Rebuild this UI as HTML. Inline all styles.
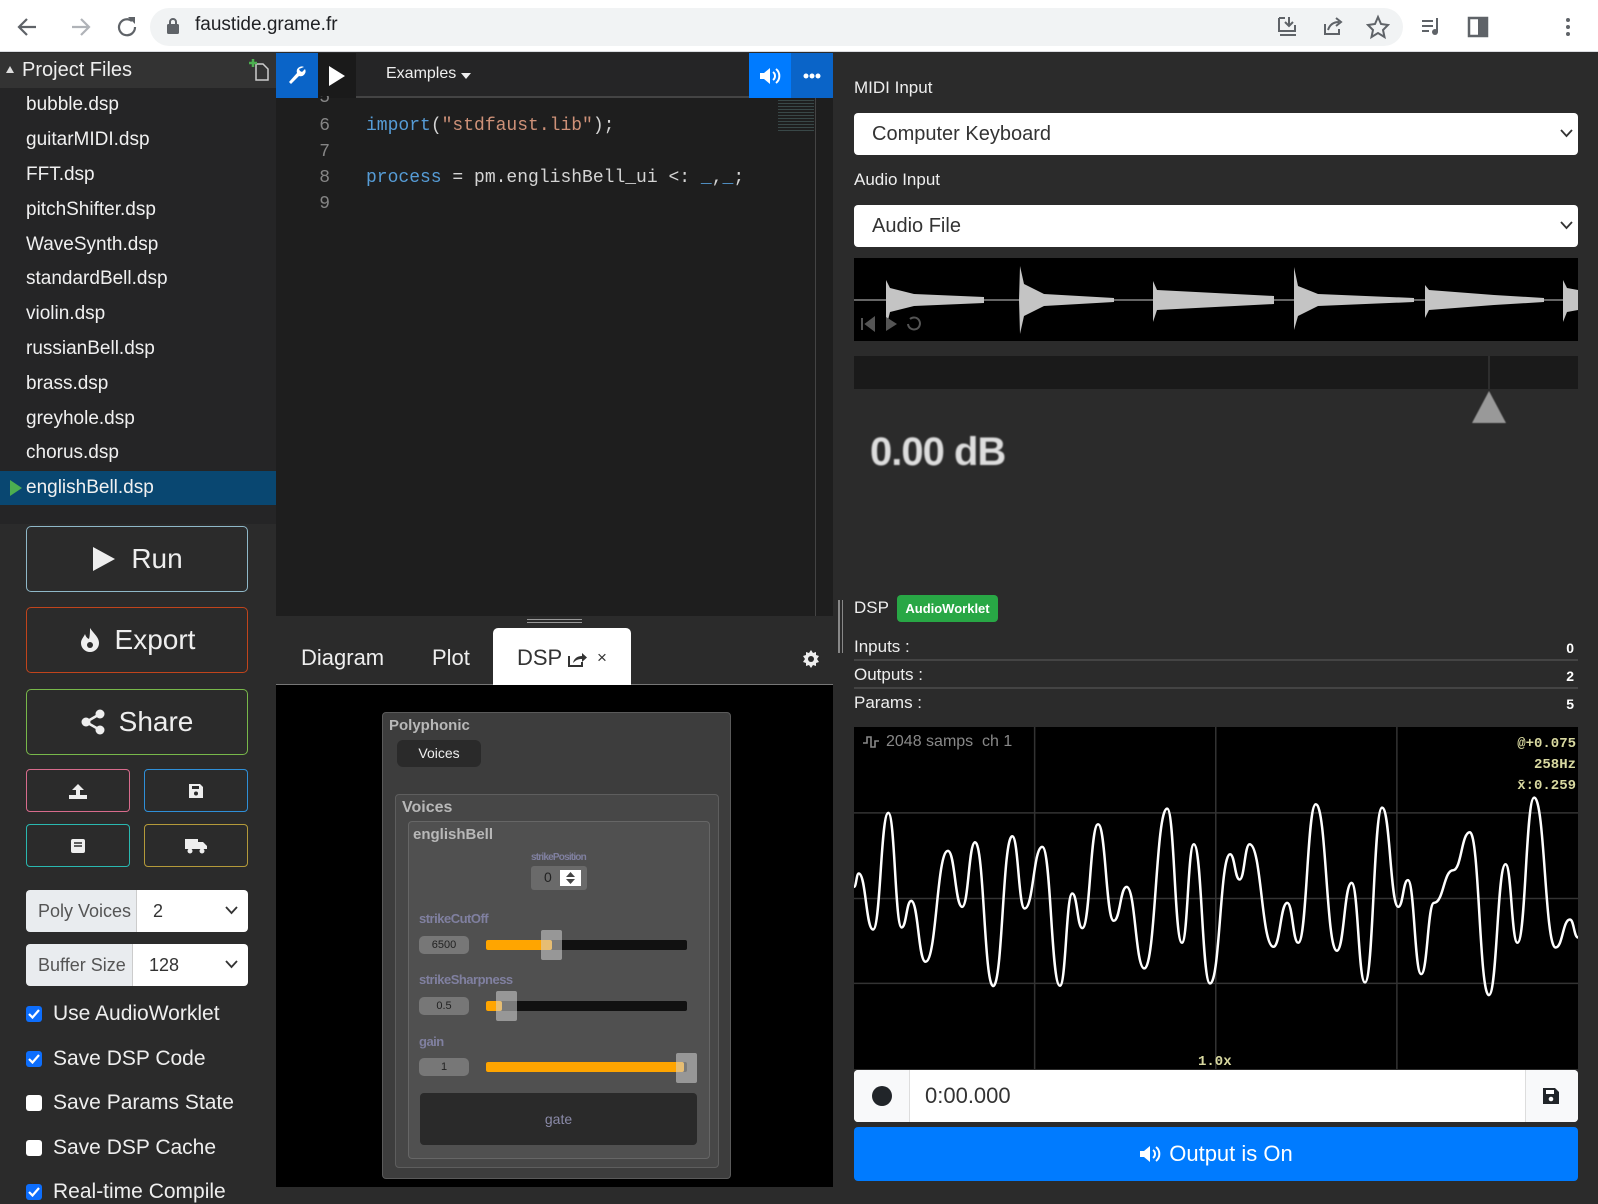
<!DOCTYPE html>
<html><head><meta charset="utf-8"><style>
*{box-sizing:border-box;margin:0;padding:0}
body{width:1598px;height:1200px;overflow:hidden;background:#2b2b2b;font-family:"Liberation Sans",sans-serif;position:relative;color:#eee}
.a{position:absolute}
.chrome{left:0;top:0;width:1598px;height:52px;background:#fff;border-bottom:1px solid #dadce0}
.pill{left:150px;top:8px;width:1253px;height:38px;background:#f1f3f4;border-radius:19px}
.file{left:26px;font-size:19px;color:#f0f0f0}
.btn{left:26px;width:222px;border:1px solid;border-radius:5px;display:flex;align-items:center;justify-content:center;font-size:28px;color:#eee;gap:14px}
.sb{width:104px;height:43px;border:1px solid;border-radius:4px;display:flex;align-items:center;justify-content:center}
.grp{left:26px;width:222px;height:42px;border-radius:4px;display:flex;font-size:18px;overflow:hidden}
.grp .l{background:#e9ecef;color:#555;display:flex;align-items:center;padding-left:12px;border-right:1px solid #ccc}
.grp .r{background:#fff;color:#333;flex:1;display:flex;align-items:center;padding-left:16px;position:relative}
.chk{left:26px;font-size:21px;color:#eee;display:flex;align-items:center;gap:11px}
.box{width:16px;height:16px;border-radius:3px;background:#fff;display:inline-flex;align-items:center;justify-content:center}
.box.on{background:#0d6efd}
.ln{left:300px;width:30px;text-align:right;font:18px "Liberation Mono",monospace;color:#858585}
.code{left:366px;font:18px "Liberation Mono",monospace;color:#d4d4d4;white-space:pre}
.lab{font-weight:bold;color:#b8b8b8;font-size:15px}
.plab{left:419px;font-weight:bold;font-size:13px;color:#8080a0;letter-spacing:-.5px}
.vb{left:419px;width:50px;height:18px;background:#777;border-radius:5px;font-size:11px;color:#222;text-align:center;line-height:18px}
.trk{left:486px;width:201px;height:10px;background:#111;border-radius:2px}
.fill{background:#ffa500;height:10px;border-radius:2px}
.th{width:21px;height:30px;background:rgba(210,210,210,.55);border-radius:2px}
.sel{left:854px;width:724px;height:42px;background:#fff;border-radius:4px;color:#333;font-size:20px;padding-left:18px;display:flex;align-items:center}
.rl{left:854px;font-size:17px;color:#eee}
.rv{right:24px;font-size:14px;font-weight:bold;color:#fff}
.hr{left:854px;width:724px;height:2px;background:#444}
</style></head><body>

<div class="a chrome"></div>
<div class="a pill"></div>
<svg class="a" style="left:16px;top:14px" width="130" height="26" viewBox="0 0 130 26">
<path d="M20 13H4M11 5L3 13l8 8" stroke="#5f6368" stroke-width="2.2" fill="none"/>
<path d="M56 13h16M65 5l8 8-8 8" stroke="#b0b3b8" stroke-width="2.2" fill="none"/>
<path d="M116 7a8 8 0 1 0 3 6" stroke="#5f6368" stroke-width="2.2" fill="none"/><path d="M112 3h7v7z" fill="#5f6368"/>
</svg>
<svg class="a" style="left:166px;top:17px" width="14" height="18"><rect x="1" y="7" width="12" height="10" rx="1.5" fill="#5f6368"/><path d="M4 7V5a3 3 0 0 1 6 0v2" stroke="#5f6368" stroke-width="2" fill="none"/></svg>
<div class="a" style="left:195px;top:14px;font-size:19px;color:#202124">faustide.grame.fr</div>
<svg class="a" style="left:1276px;top:14px" width="310" height="26" viewBox="0 0 310 26">
<g stroke="#5f6368" stroke-width="2" fill="none">
<path d="M3 4h6M3 4v13h16v-6M13 3v9M9 8l4 4 4-4M4 21h16"/>
<path d="M49 10v10h14v-5M52 16c2-6 6-8 11-8M60 4l5 4-5 4"/>
<path d="M102 3l3 7 7 1-5 5 1.5 7-6.5-4-6.5 4 1.5-7-5-5 7-1z"/>
<path d="M146 7h11M146 12h11M146 17h7M161 4v14"/>
</g>
<circle cx="159" cy="18" r="3" fill="#5f6368"/>
<rect x="193" y="4" width="18" height="18" stroke="#5f6368" stroke-width="2.5" fill="none"/><rect x="202" y="4" width="9" height="18" fill="#5f6368"/>
<circle cx="292" cy="6" r="2" fill="#5f6368"/><circle cx="292" cy="13" r="2" fill="#5f6368"/><circle cx="292" cy="20" r="2" fill="#5f6368"/>
</svg>

<div class="a" style="left:0;top:53px;width:276px;height:35px;background:#333"></div>
<div class="a" style="left:0;top:88px;width:276px;height:436px;background:#252526"></div>
<div class="a" style="left:6px;top:66px;width:0;height:0;border-left:4px solid transparent;border-right:4px solid transparent;border-bottom:7px solid #ddd"></div>
<div class="a" style="left:22px;top:59px;font-size:20px;color:#eee">Project Files</div>
<svg class="a" style="left:247px;top:58px" width="24" height="24"><path d="M9 6h7l5 5v11H9z" stroke="#ccc" stroke-width="1.5" fill="none"/><path d="M6 1v8M2 5h8" stroke="#4caf50" stroke-width="2.5"/></svg>
<div class="a file" style="top:94px">bubble.dsp</div>
<div class="a file" style="top:129px">guitarMIDI.dsp</div>
<div class="a file" style="top:164px">FFT.dsp</div>
<div class="a file" style="top:199px">pitchShifter.dsp</div>
<div class="a file" style="top:234px">WaveSynth.dsp</div>
<div class="a file" style="top:268px">standardBell.dsp</div>
<div class="a file" style="top:303px">violin.dsp</div>
<div class="a file" style="top:338px">russianBell.dsp</div>
<div class="a file" style="top:373px">brass.dsp</div>
<div class="a file" style="top:408px">greyhole.dsp</div>
<div class="a file" style="top:442px">chorus.dsp</div>
<div class="a" style="left:0;top:471px;width:276px;height:34px;background:#094771"></div>
<div class="a" style="left:10px;top:480px;width:0;height:0;border-top:8px solid transparent;border-bottom:8px solid transparent;border-left:12px solid #4caf50"></div>
<div class="a file" style="top:477px">englishBell.dsp</div>

<div class="a btn" style="top:526px;height:66px;border-color:#8fb8c8"><svg width="26" height="28"><path d="M2 2l22 12L2 26z" fill="#eee"/></svg>Run</div>
<div class="a btn" style="top:607px;height:66px;border-color:#c0441c"><svg width="22" height="28" viewBox="0 0 22 28"><path d="M11 2c3 5 9 9 9 15a9 9 0 0 1-18 0c0-4 3-6 4-9 1 3 2 4 4 5 1-4 1-7 1-11z" fill="#eee"/><circle cx="11" cy="19" r="3" fill="#2b2b2b"/></svg>Export</div>
<div class="a btn" style="top:689px;height:66px;border-color:#78b84a"><svg width="24" height="26"><circle cx="19" cy="5" r="4.5" fill="#eee"/><circle cx="5" cy="13" r="4.5" fill="#eee"/><circle cx="19" cy="21" r="4.5" fill="#eee"/><path d="M19 5L5 13l14 8" stroke="#eee" stroke-width="2.5" fill="none"/></svg>Share</div>
<div class="a sb" style="left:26px;top:769px;border-color:#d86b8c"><svg width="18" height="16"><path d="M9 1l6 6h-4v5H7V7H3z" fill="#eee"/><rect x="0" y="12" width="18" height="4" fill="#eee"/></svg></div>
<div class="a sb" style="left:144px;top:769px;border-color:#2f8fd8"><svg width="16" height="16"><path d="M1 1h11l3 3v11H1z" fill="#eee"/><rect x="4" y="3" width="7" height="3" fill="#2b2b2b"/><circle cx="8" cy="10.5" r="2" fill="#2b2b2b"/></svg></div>
<div class="a sb" style="left:26px;top:824px;border-color:#2ab8b0"><svg width="16" height="16"><rect x="1" y="1" width="14" height="14" rx="2" fill="#eee"/><path d="M4 5h8M4 8h8" stroke="#2b2b2b" stroke-width="1.5"/></svg></div>
<div class="a sb" style="left:144px;top:824px;border-color:#b49a3a"><svg width="22" height="16"><rect x="0" y="1" width="13" height="10" fill="#eee"/><path d="M13 4h5l4 4v3h-9z" fill="#eee"/><circle cx="5" cy="13" r="2.5" fill="#eee"/><circle cx="17" cy="13" r="2.5" fill="#eee"/></svg></div>
<div class="a grp" style="top:890px"><div class="l" style="width:111px">Poly Voices</div><div class="r">2<svg class="a" style="right:10px;top:16px" width="13" height="9"><path d="M1 1l5.5 6L12 1" stroke="#333" stroke-width="1.8" fill="none"/></svg></div></div>
<div class="a grp" style="top:944px"><div class="l" style="width:107px">Buffer Size</div><div class="r">128<svg class="a" style="right:10px;top:16px" width="13" height="9"><path d="M1 1l5.5 6L12 1" stroke="#333" stroke-width="1.8" fill="none"/></svg></div></div>
<div class="a chk" style="top:1002px"><span class="box on"><svg width="12" height="10"><path d="M1 5l3.5 3.5L11 1" stroke="#fff" stroke-width="2.2" fill="none"/></svg></span>Use AudioWorklet</div>
<div class="a chk" style="top:1047px"><span class="box on"><svg width="12" height="10"><path d="M1 5l3.5 3.5L11 1" stroke="#fff" stroke-width="2.2" fill="none"/></svg></span>Save DSP Code</div>
<div class="a chk" style="top:1091px"><span class="box"></span>Save Params State</div>
<div class="a chk" style="top:1136px"><span class="box"></span>Save DSP Cache</div>
<div class="a chk" style="top:1180px"><span class="box on"><svg width="12" height="10"><path d="M1 5l3.5 3.5L11 1" stroke="#fff" stroke-width="2.2" fill="none"/></svg></span>Real-time Compile</div>

<div class="a" style="left:276px;top:53px;width:557px;height:563px;background:#1e1e1e"></div>
<div class="a" style="left:276px;top:53px;width:557px;height:45px;background:#252526;border-bottom:2px solid #444"></div>
<div class="a" style="left:276px;top:53px;width:42px;height:45px;background:#0a64c8"></div>
<svg class="a" style="left:287px;top:64px" width="20" height="22"><path d="M17 3a5 5 0 0 0-7 6L2 18l2 2 8-8a5 5 0 0 0 6-7l-3 3-2-1-1-2z" fill="#fff"/></svg>
<div class="a" style="left:318px;top:53px;width:38px;height:45px;background:#1a1a1a"></div>
<svg class="a" style="left:328px;top:65px" width="18" height="22"><path d="M1 1l16 10L1 21z" fill="#fff"/></svg>
<div class="a" style="left:386px;top:65px;font-size:16px;color:#eee">Examples</div>
<div class="a" style="left:461px;top:73px;border-left:5px solid transparent;border-right:5px solid transparent;border-top:6px solid #eee"></div>
<div class="a" style="left:749px;top:53px;width:42px;height:45px;background:#007bff"></div>
<svg class="a" style="left:759px;top:66px" width="24" height="20"><path d="M1 7h4l6-5v16l-6-5H1z" fill="#fff"/><path d="M14 6a5 5 0 0 1 0 8M17 3a9 9 0 0 1 0 14" stroke="#fff" stroke-width="2" fill="none"/></svg>
<div class="a" style="left:791px;top:53px;width:42px;height:45px;background:#0a64c8"></div>
<svg class="a" style="left:803px;top:73px" width="18" height="6"><circle cx="3" cy="3" r="2.5" fill="#fff"/><circle cx="9" cy="3" r="2.5" fill="#fff"/><circle cx="15" cy="3" r="2.5" fill="#fff"/></svg>
<div class="a" style="left:778px;top:100px;width:36px;height:32px;opacity:.3;background:repeating-linear-gradient(#7aa 0 1px,transparent 1px 3px)"></div>
<div class="a" style="left:815px;top:98px;width:1px;height:518px;background:#444"></div>
<div class="a ln" style="top:96px;height:10px;overflow:hidden;line-height:4px">5</div>
<div class="a ln" style="top:116px">6</div>
<div class="a ln" style="top:142px">7</div>
<div class="a ln" style="top:168px">8</div>
<div class="a ln" style="top:194px">9</div>
<div class="a code" style="top:116px"><span style="color:#569cd6">import</span>(<span style="color:#ce9178">"stdfaust.lib"</span>);</div>
<div class="a code" style="top:168px"><span style="color:#569cd6">process</span> = pm.englishBell_ui &lt;: <span style="color:#569cd6">_</span>,<span style="color:#569cd6">_</span>;</div>

<div class="a" style="left:527px;top:619px;width:55px;height:1px;background:#999"></div>
<div class="a" style="left:527px;top:622px;width:55px;height:1px;background:#999"></div>
<div class="a" style="left:276px;top:684px;width:557px;height:1px;background:#777"></div>
<div class="a" style="left:301px;top:645px;font-size:22px;color:#eee">Diagram</div>
<div class="a" style="left:432px;top:645px;font-size:22px;color:#eee">Plot</div>
<div class="a" style="left:493px;top:628px;width:138px;height:57px;background:#fff;border-radius:5px 5px 0 0"></div>
<div class="a" style="left:517px;top:645px;font-size:22px;color:#333">DSP</div>
<svg class="a" style="left:567px;top:650px" width="20" height="18"><path d="M2 6v10h13v-4" stroke="#333" stroke-width="2" fill="none"/><path d="M6 13c1-5 5-7 9-7V3l5 4.5-5 4.5V9c-4 0-6 1-9 4z" fill="#333"/></svg>
<div class="a" style="left:597px;top:648px;font-size:17px;color:#333">×</div>
<svg class="a" style="left:802px;top:650px" width="18" height="18" viewBox="0 0 18 18"><path d="M9 0l2 3 3-1 0 3 3 1-2 3 2 3-3 1 0 3-3-1-2 3-2-3-3 1 0-3-3-1 2-3-2-3 3-1 0-3 3 1z" fill="#eee"/><circle cx="9" cy="9" r="3" fill="#2b2b2b"/></svg>
<div class="a" style="left:276px;top:685px;width:557px;height:502px;background:#000"></div>

<div class="a" style="left:382px;top:712px;width:349px;height:467px;background:#3d3d3d;border:1px solid #5a5a5a;border-radius:4px"></div>
<div class="a lab" style="left:389px;top:717px">Polyphonic</div>
<div class="a" style="left:397px;top:740px;width:84px;height:27px;background:#2a2a2a;border-radius:6px;font-size:14px;color:#eee;text-align:center;line-height:27px">Voices</div>
<div class="a" style="left:395px;top:794px;width:324px;height:374px;background:#474747;border:1px solid #5e5e5e;border-radius:4px"></div>
<div class="a lab" style="left:402px;top:799px;font-size:16px">Voices</div>
<div class="a" style="left:408px;top:821px;width:302px;height:338px;background:#505050;border:1px solid #666;border-radius:4px"></div>
<div class="a lab" style="left:413px;top:826px">englishBell</div>
<div class="a" style="left:531px;top:852px;font-size:10px;font-weight:bold;color:#8080a0;letter-spacing:-.8px">strikePosition</div>
<div class="a" style="left:531px;top:866px;width:56px;height:24px;background:#6a6a6a;border-radius:3px"></div>
<div class="a" style="left:544px;top:869px;font-size:14px;color:#222">0</div>
<div class="a" style="left:560px;top:870px;width:21px;height:16px;background:#fff"></div>
<svg class="a" style="left:565px;top:871px" width="11" height="14"><path d="M1 6l4.5-5L10 6zM1 8l4.5 5L10 8z" fill="#444"/></svg>

<div class="a plab" style="top:911px">strikeCutOff</div>
<div class="a vb" style="top:936px">6500</div>
<div class="a trk" style="top:940px"><div class="fill" style="width:66px"></div></div>
<div class="a th" style="left:541px;top:930px"></div>
<div class="a plab" style="top:972px">strikeSharpness</div>
<div class="a vb" style="top:997px">0.5</div>
<div class="a trk" style="top:1001px"><div class="fill" style="width:16px"></div></div>
<div class="a th" style="left:496px;top:991px"></div>
<div class="a plab" style="top:1034px">gain</div>
<div class="a vb" style="top:1058px">1</div>
<div class="a trk" style="top:1062px"><div class="fill" style="width:198px"></div></div>
<div class="a th" style="left:676px;top:1053px"></div>
<div class="a" style="left:420px;top:1093px;width:277px;height:52px;background:#2a2a2a;border-radius:4px;text-align:center;line-height:52px;font-size:14px;color:#8a8aa8">gate</div>

<div class="a" style="left:838px;top:600px;width:2px;height:53px;background:#888"></div>
<div class="a" style="left:842px;top:600px;width:1px;height:53px;background:#888"></div>
<div class="a rl" style="top:78px">MIDI Input</div>
<div class="a sel" style="top:113px">Computer Keyboard</div>
<svg class="a" style="left:1560px;top:129px" width="13" height="9"><path d="M1 1l5.5 6L12 1" stroke="#333" stroke-width="1.8" fill="none"/></svg>
<div class="a rl" style="top:170px">Audio Input</div>
<div class="a sel" style="top:205px">Audio File</div>
<svg class="a" style="left:1560px;top:221px" width="13" height="9"><path d="M1 1l5.5 6L12 1" stroke="#333" stroke-width="1.8" fill="none"/></svg>

<svg class="a" style="left:854px;top:258px" width="724" height="83" viewBox="0 0 724 83">
<rect width="724" height="83" fill="#000"/>
<line x1="0" y1="42" x2="724" y2="42" stroke="#888" stroke-width="1.5"/>
<g fill="#c4c4c4">
<path d="M32 42L32 22 36 30 60 36 130 39 130 45 60 48 36 54 32 70Z"/>
<path d="M165 42L166 8 170 26 190 36 260 40 260 44 190 48 170 58 166 76Z"/>
<path d="M299 42L299 23 303 32 420 38 420 46 303 52 299 64Z"/>
<path d="M440 42L440 9 444 28 464 36 560 40 560 44 464 48 444 58 440 72Z"/>
<path d="M571 42L571 27 575 32 640 37 690 40 690 44 640 47 575 52 571 60Z"/>
<path d="M709 42L709 22 713 30 724 32 724 52 713 54 709 64Z"/>
</g>
<path d="M8 60v12M20 60v12L12 66z" fill="#555" stroke="#555" stroke-width="2"/>
<path d="M32 59l11 7-11 7z" fill="#555"/>
<path d="M56 61a6 6 0 1 1-2 5" stroke="#555" stroke-width="2" fill="none"/>
</svg>
<div class="a" style="left:854px;top:356px;width:724px;height:33px;background:#1a1a1a"></div>
<div class="a" style="left:1488px;top:356px;width:2px;height:33px;background:#2e2e2e"></div>
<svg class="a" style="left:1471px;top:390px" width="36" height="34"><path d="M18 1L35 33H1z" fill="#999" filter="blur(0.6px)"/></svg>
<div class="a" style="left:870px;top:430px;font-size:40px;font-weight:bold;color:#ddd;letter-spacing:-1px;filter:blur(0.8px)">0.00 dB</div>

<div class="a rl" style="top:598px">DSP</div>
<div class="a" style="left:897px;top:595px;width:101px;height:27px;background:#28a745;border-radius:4px;color:#fff;font-weight:bold;font-size:13px;text-align:center;line-height:27px">AudioWorklet</div>
<div class="a rl" style="top:637px">Inputs :</div><div class="a rv" style="top:640px">0</div>
<div class="a hr" style="top:659px"></div>
<div class="a rl" style="top:665px">Outputs :</div><div class="a rv" style="top:668px">2</div>
<div class="a hr" style="top:687px"></div>
<div class="a rl" style="top:693px">Params :</div><div class="a rv" style="top:696px">5</div>

<div class="a" style="left:854px;top:727px;width:724px;height:342px;background:#000"></div>
<svg class="a" style="left:854px;top:727px" width="724" height="342" viewBox="8 20 1519 1027" preserveAspectRatio="none">
<g stroke="#333" stroke-width="1.5">
<line x1="387" y1="0" x2="387" y2="1100" vector-effect="non-scaling-stroke"/>
<line x1="767" y1="0" x2="767" y2="1100" vector-effect="non-scaling-stroke"/>
<line x1="1147" y1="0" x2="1147" y2="1100" vector-effect="non-scaling-stroke"/>
<line x1="0" y1="278" x2="1600" y2="278" vector-effect="non-scaling-stroke"/>
<line x1="0" y1="535" x2="1600" y2="535" vector-effect="non-scaling-stroke"/>
<line x1="0" y1="790" x2="1600" y2="790" vector-effect="non-scaling-stroke"/>
</g>
<path vector-effect="non-scaling-stroke" stroke="#fff" stroke-width="2.5" fill="none" d="M8,500 C13,500 13,460 18,460 C33,460 33,628 48,628 C64,628 64,278 80,278 C94,278 94,622 108,622 C118,622 118,542 128,542 C143,542 143,725 158,725 C181.5,725 181.5,392 205,392 C220,392 220,560 235,560 C248.5,560 248.5,366 262,366 C281,366 281,798 300,798 C320,798 320,348 340,348 C353,348 353,565 366,565 C384.5,565 384.5,380 403,380 C421.5,380 421.5,797 440,797 C453,797 453,520 466,520 C476.5,520 476.5,624 487,624 C503.5,624 503.5,312 520,312 C536.5,312 536.5,602 553,602 C566.5,602 566.5,500 580,500 C598.5,500 598.5,745 617,745 C641,745 641,265 665,265 C680.5,265 680.5,668 696,668 C708.5,668 708.5,372 721,372 C738,372 738,790 755,790 C776,790 776,402 797,402 C807,402 807,478 817,478 C827.5,478 827.5,372 838,372 C863,372 863,680 888,680 C902.5,680 902.5,548 917,548 C928.5,548 928.5,668 940,668 C958.5,668 958.5,252 977,252 C999,252 999,692 1021,692 C1036.5,692 1036.5,488 1052,488 C1066,488 1066,787 1080,787 C1098,787 1098,262 1116,262 C1133,262 1133,560 1150,560 C1160,560 1160,480 1170,480 C1184,480 1184,762 1198,762 C1211.5,762 1211.5,548 1225,548 C1245,548 1245,450 1265,450 C1282.5,450 1282.5,336 1300,336 C1320,336 1320,825 1340,825 C1357.5,825 1357.5,432 1375,432 C1387.5,432 1387.5,668 1400,668 C1417.5,668 1417.5,232 1435,232 C1457.5,232 1457.5,682 1480,682 C1495,682 1495,598 1510,598 C1518.5,598 1518.5,652 1527,652"/>
</svg>
<svg class="a" style="left:862px;top:734px" width="18" height="16"><path d="M1 9h4V3h4v10h4V7h4" stroke="#888" stroke-width="1.6" fill="none"/></svg>
<div class="a" style="left:886px;top:733px;font-size:16px;color:#888">2048 samps&nbsp; ch 1</div>
<div class="a" style="right:22px;top:734px;font:bold 14px 'Liberation Mono',monospace;color:#d8d8a0;text-align:right;line-height:21px">@+0.075<br>258Hz<br>x̄:0.259</div>
<div class="a" style="left:1198px;top:1054px;font:bold 14px 'Liberation Mono',monospace;color:#d8d8a0">1.0x</div>

<div class="a" style="left:854px;top:1070px;width:724px;height:52px;background:#fff;border-radius:4px;overflow:hidden">
<div class="a" style="left:0;top:0;width:56px;height:52px;background:#f8f9fa;border-right:1px solid #ddd"></div>
<div class="a" style="left:18px;top:16px;width:20px;height:20px;border-radius:50%;background:#212529"></div>
<div class="a" style="left:71px;top:13px;font-size:22px;color:#333">0:00.000</div>
<div class="a" style="right:0;top:0;width:53px;height:52px;background:#f8f9fa;border-left:1px solid #ddd"></div>
<svg class="a" style="left:688px;top:17px" width="18" height="18"><path d="M1 1h12l4 4v12H1z" fill="#212529"/><rect x="4" y="3" width="8" height="4" fill="#fff"/><circle cx="9" cy="12" r="2.3" fill="#fff"/></svg>
</div>
<div class="a" style="left:854px;top:1127px;width:724px;height:54px;background:#007bff;border-radius:4px;display:flex;align-items:center;justify-content:center;gap:6px;font-size:22px;color:#fff">
<svg width="24" height="20"><path d="M1 7h4l6-5v16l-6-5H1z" fill="#fff"/><path d="M14 6a5 5 0 0 1 0 8M17 3a9 9 0 0 1 0 14" stroke="#fff" stroke-width="2" fill="none"/></svg>Output is On</div>
</body></html>
